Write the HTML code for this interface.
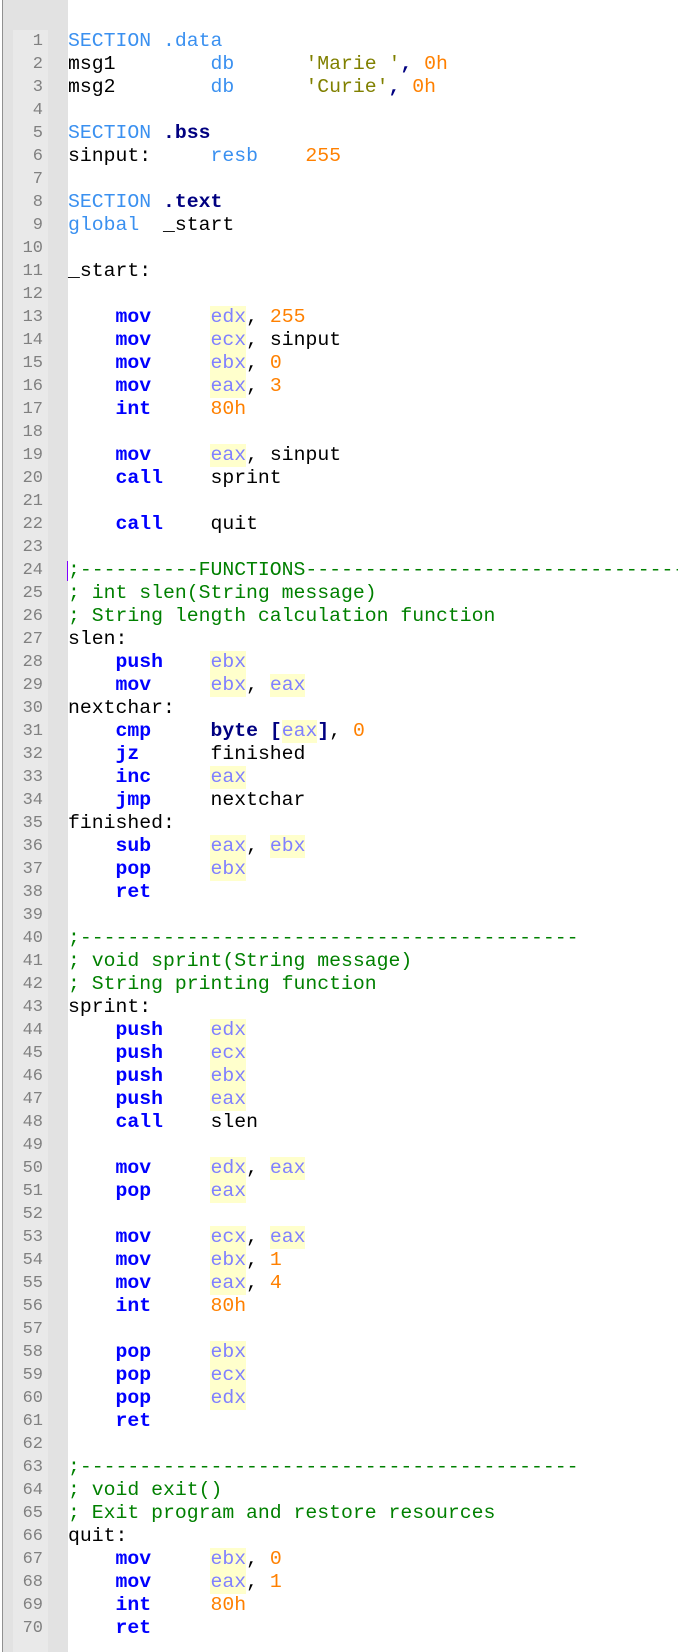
<!DOCTYPE html>
<html><head><meta charset="utf-8"><style>
html,body{margin:0;padding:0;background:#fff;width:678px;height:1652px;overflow:hidden;position:relative;font-family:"Liberation Mono",monospace;}
.g0{position:absolute;left:2px;top:0;width:1px;height:1652px;background:#909090}
.g1{position:absolute;left:3px;top:0;width:65px;height:1652px;background:#e2e2e2}
.g2{position:absolute;left:13px;top:30px;width:35px;height:1622px;background:#e9e9e9}
.ln{position:absolute;left:0;width:43px;text-align:right;font-size:17px;color:#808080;height:23px;line-height:23px}
.c{position:absolute;left:68px;white-space:pre;font-size:19.8px;height:23px;line-height:23px;color:#000}
.k{color:#3a90f0}
.nv{color:#000080;font-weight:bold}
.s{color:#808000}
.n{color:#ff8000}
.i{color:#0000ff;font-weight:bold}
.r{color:#8080ff;background:#ffffcc;display:inline-block;height:23px}
.m{color:#008000}
.cur{position:absolute;left:67px;width:1px;height:20px;background:#8000ff}
</style></head><body>
<div class="g0"></div><div class="g1"></div><div class="g2"></div>
<div id="w"></div>
<script>
var L=[
'<span class="k">SECTION .data</span>',
'msg1        <span class="k">db</span>      <span class="s">\'Marie \'</span><span class="nv">,</span> <span class="n">0h</span>',
'msg2        <span class="k">db</span>      <span class="s">\'Curie\'</span><span class="nv">,</span> <span class="n">0h</span>',
'',
'<span class="k">SECTION</span> <span class="nv">.bss</span>',
'sinput:     <span class="k">resb</span>    <span class="n">255</span>',
'',
'<span class="k">SECTION</span> <span class="nv">.text</span>',
'<span class="k">global</span>  _start',
'',
'_start:',
'',
'    <span class="i">mov</span>     <span class="r">edx</span>, <span class="n">255</span>',
'    <span class="i">mov</span>     <span class="r">ecx</span>, sinput',
'    <span class="i">mov</span>     <span class="r">ebx</span>, <span class="n">0</span>',
'    <span class="i">mov</span>     <span class="r">eax</span>, <span class="n">3</span>',
'    <span class="i">int</span>     <span class="n">80h</span>',
'',
'    <span class="i">mov</span>     <span class="r">eax</span>, sinput',
'    <span class="i">call</span>    sprint',
'',
'    <span class="i">call</span>    quit',
'',
'<span class="m">;----------FUNCTIONS---------------------------------</span>',
'<span class="m">; int slen(String message)</span>',
'<span class="m">; String length calculation function</span>',
'slen:',
'    <span class="i">push</span>    <span class="r">ebx</span>',
'    <span class="i">mov</span>     <span class="r">ebx</span>, <span class="r">eax</span>',
'nextchar:',
'    <span class="i">cmp</span>     <span class="nv">byte [</span><span class="r">eax</span><span class="nv">]</span>, <span class="n">0</span>',
'    <span class="i">jz</span>      finished',
'    <span class="i">inc</span>     <span class="r">eax</span>',
'    <span class="i">jmp</span>     nextchar',
'finished:',
'    <span class="i">sub</span>     <span class="r">eax</span>, <span class="r">ebx</span>',
'    <span class="i">pop</span>     <span class="r">ebx</span>',
'    <span class="i">ret</span>',
'',
'<span class="m">;------------------------------------------</span>',
'<span class="m">; void sprint(String message)</span>',
'<span class="m">; String printing function</span>',
'sprint:',
'    <span class="i">push</span>    <span class="r">edx</span>',
'    <span class="i">push</span>    <span class="r">ecx</span>',
'    <span class="i">push</span>    <span class="r">ebx</span>',
'    <span class="i">push</span>    <span class="r">eax</span>',
'    <span class="i">call</span>    slen',
'',
'    <span class="i">mov</span>     <span class="r">edx</span>, <span class="r">eax</span>',
'    <span class="i">pop</span>     <span class="r">eax</span>',
'',
'    <span class="i">mov</span>     <span class="r">ecx</span>, <span class="r">eax</span>',
'    <span class="i">mov</span>     <span class="r">ebx</span>, <span class="n">1</span>',
'    <span class="i">mov</span>     <span class="r">eax</span>, <span class="n">4</span>',
'    <span class="i">int</span>     <span class="n">80h</span>',
'',
'    <span class="i">pop</span>     <span class="r">ebx</span>',
'    <span class="i">pop</span>     <span class="r">ecx</span>',
'    <span class="i">pop</span>     <span class="r">edx</span>',
'    <span class="i">ret</span>',
'',
'<span class="m">;------------------------------------------</span>',
'<span class="m">; void exit()</span>',
'<span class="m">; Exit program and restore resources</span>',
'quit:',
'    <span class="i">mov</span>     <span class="r">ebx</span>, <span class="n">0</span>',
'    <span class="i">mov</span>     <span class="r">eax</span>, <span class="n">1</span>',
'    <span class="i">int</span>     <span class="n">80h</span>',
'    <span class="i">ret</span>'
];
var h='';
for(var j=0;j<L.length;j++){var t=30+j*23;
h+='<div class="ln" style="top:'+t+'px">'+(j+1)+'</div><div class="c" style="top:'+t+'px">'+L[j]+'</div>';}
h+='<div class="cur" style="top:'+(30+23*23+2)+'px"></div>';
document.getElementById('w').innerHTML=h;
</script>
</body></html>
